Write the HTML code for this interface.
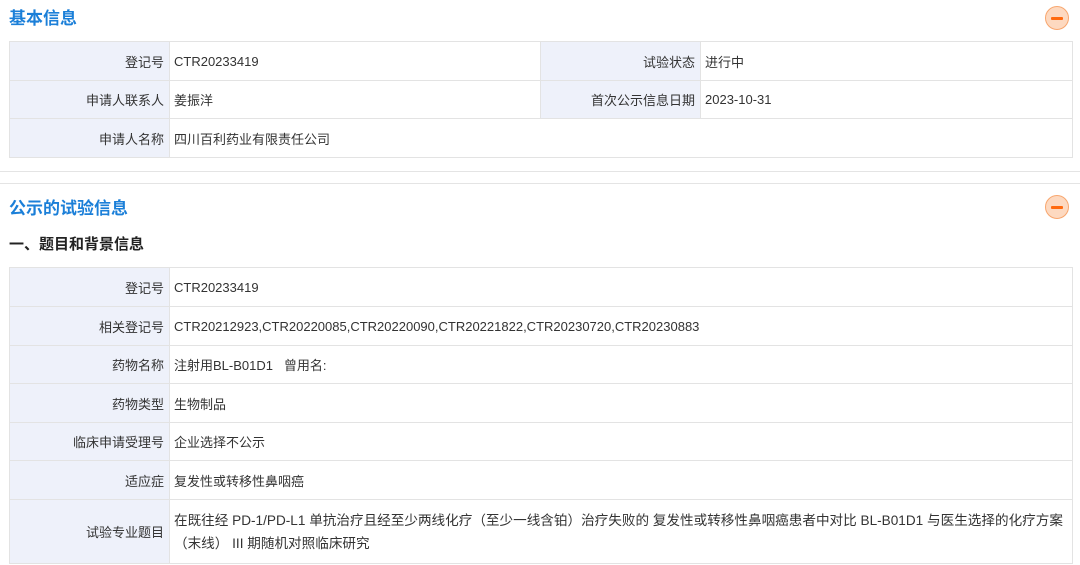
<!DOCTYPE html><html><head><meta charset="utf-8"><style>
*{margin:0;padding:0;box-sizing:border-box}
body{width:1080px;height:565px;background:#fff;font-family:"Liberation Sans","Noto Sans CJK SC",sans-serif;position:relative;overflow:hidden;color:#333}
.h{position:absolute;left:9px;font-size:17px;font-weight:bold;color:#1b7fd8}
.sub{position:absolute;left:9px;font-size:15px;font-weight:bold;color:#222}
.ic{position:absolute;left:1045px;width:24px;height:24px;border-radius:50%;background:#fdd9c0;border:1px solid #f8a66e}
.ic:after{content:"";position:absolute;left:5px;top:9.5px;width:12px;height:3px;background:#ff6a10;border-radius:1px}
table{position:absolute;left:9px;width:1064px;border-collapse:collapse;font-size:13px}
td{border:1px solid #e3e3e3;padding:0 4px;color:#333}
td.l{background:#eef1fa;text-align:right;width:160px;padding:0 5px}
.hr{position:absolute;left:0;width:1080px;height:1px;background:#e4e4e4}
</style></head><body>
<div class="h" style="top:4px">基本信息</div>
<div class="ic" style="top:6px"></div>
<table style="top:41px">
<tr style="height:39px"><td class="l">登记号</td><td style="width:371px">CTR20233419</td><td class="l">试验状态</td><td>进行中</td></tr>
<tr style="height:38px"><td class="l">申请人联系人</td><td>姜振洋</td><td class="l">首次公示信息日期</td><td>2023-10-31</td></tr>
<tr style="height:39px"><td class="l">申请人名称</td><td colspan="3">四川百利药业有限责任公司</td></tr>
</table>
<div class="hr" style="top:171px"></div>
<div class="hr" style="top:183px"></div>
<div class="h" style="top:194px">公示的试验信息</div>
<div class="ic" style="top:195px"></div>
<div class="sub" style="top:233px">一、题目和背景信息</div>
<table style="top:267px">
<tr style="height:39px"><td class="l">登记号</td><td>CTR20233419</td></tr>
<tr style="height:39px"><td class="l">相关登记号</td><td>CTR20212923,CTR20220085,CTR20220090,CTR20221822,CTR20230720,CTR20230883</td></tr>
<tr style="height:38px"><td class="l">药物名称</td><td>注射用BL-B01D1&nbsp;&nbsp;&nbsp;曾用名:</td></tr>
<tr style="height:39px"><td class="l">药物类型</td><td>生物制品</td></tr>
<tr style="height:38px"><td class="l">临床申请受理号</td><td>企业选择不公示</td></tr>
<tr style="height:39px"><td class="l">适应症</td><td>复发性或转移性鼻咽癌</td></tr>
<tr style="height:64px"><td class="l">试验专业题目</td><td style="line-height:23px;font-size:13.6px">在既往经 PD-1/PD-L1 单抗治疗且经至少两线化疗（至少一线含铂）治疗失败的 复发性或转移性鼻咽癌患者中对比 BL-B01D1 与医生选择的化疗方案<br>（末线） III 期随机对照临床研究</td></tr>
</table>
</body></html>
